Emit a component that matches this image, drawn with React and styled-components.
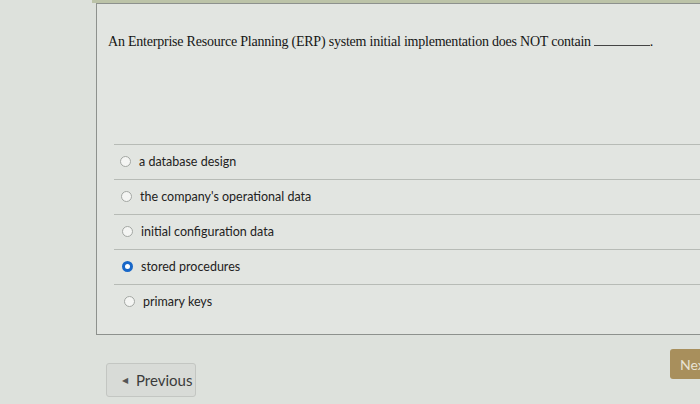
import styled, { createGlobalStyle } from "styled-components";

const Global = createGlobalStyle`
  html, body {
    margin: 0;
    padding: 0;
    background: #dde1dc;
    overflow: hidden;
  }
  body {
    font-family: "Lato", "Liberation Sans", sans-serif;
    color: #333;
  }
`;

const Page = styled.div`
  width: 700px;
  height: 404px;
  overflow: hidden;
  background: #dde1dc;
  display: flex;
  flex-direction: column;
`;

const TopStrip = styled.div`
  margin-left: 92px;
  height: 3px;
  background: #bcc3a8;
`;

const Panel = styled.div`
  margin-left: 96px;
  margin-right: -20px;
  height: 332px;
  border: 1px solid #8d918d;
  border-right: none;
  background: #e2e5e1;
  box-sizing: border-box;
  padding: 30px 0 0 11px;
`;

const Question = styled.p`
  margin: 0;
  font-family: "Liberation Serif", "Times New Roman", serif;
  font-size: 14px;
  color: #151515;
  letter-spacing: -0.22px;
`;

const Blank = styled.span`
  display: inline-block;
  width: 56px;
  border-bottom: 1px solid #444;
  margin-left: 3px;
  vertical-align: baseline;
`;

const Options = styled.ul`
  list-style: none;
  margin: 94px 0 0 6px;
  padding: 0;
`;

const Option = styled.li`
  display: flex;
  align-items: center;
  gap: 8px;
  height: 35px;
  box-sizing: border-box;
  border-top: 1px solid #b7bbb6;
  padding-left: ${(p) => p.$indent}px;
  padding-bottom: 2px;
  font-size: 12.5px;
  color: #222;
`;

const Radio = styled.span`
  width: 11px;
  height: 11px;
  border-radius: 50%;
  box-sizing: border-box;
  flex-shrink: 0;
  background: ${(p) => (p.$checked ? "#fff" : "#f4f5f3")};
  border: ${(p) => (p.$checked ? "3.5px solid #1867c8" : "1px solid #a3a7a3")};
`;

const Footer = styled.div`
  flex: 1;
  display: flex;
  justify-content: space-between;
  align-items: flex-start;
  padding-left: 106px;
`;

const PrevButton = styled.button`
  margin-top: 28px;
  width: 90px;
  height: 34px;
  border: 1px solid #c3c6c2;
  border-radius: 3px;
  background: #d8dbd7;
  font-family: "Lato", "Liberation Sans", sans-serif;
  font-size: 15px;
  color: #3b3b3b;
  display: flex;
  align-items: center;
  gap: 8px;
  padding: 0 0 0 15px;
`;

const Arrow = styled.span`
  font-size: 8px;
  color: #555;
`;

const NextButton = styled.button`
  margin-top: 14px;
  margin-right: -30px;
  width: 60px;
  height: 30px;
  border: none;
  border-radius: 3px 0 0 3px;
  background: #a88f5c;
  color: #e8e2d4;
  font-family: "Lato", "Liberation Sans", sans-serif;
  font-size: 14px;
  text-align: left;
  padding: 0 0 0 10px;
`;

const options = [
  { text: "a database design", indent: 6 },
  { text: "the company's operational data", indent: 7 },
  { text: "initial configuration data", indent: 8 },
  { text: "stored procedures", indent: 8, checked: true },
  { text: "primary keys", indent: 10 },
];

export default function App() {
  return (
    <Page>
      <Global />
      <TopStrip />
      <Panel>
        <Question>
          An Enterprise Resource Planning (ERP) system initial implementation does NOT contain
          <Blank />.
        </Question>
        <Options>
          {options.map((o) => (
            <Option key={o.text} $indent={o.indent}>
              <Radio $checked={o.checked} />
              {o.text}
            </Option>
          ))}
        </Options>
      </Panel>
      <Footer>
        <PrevButton>
          <Arrow>◀</Arrow>
          Previous
        </PrevButton>
        <NextButton>Next</NextButton>
      </Footer>
    </Page>
  );
}
